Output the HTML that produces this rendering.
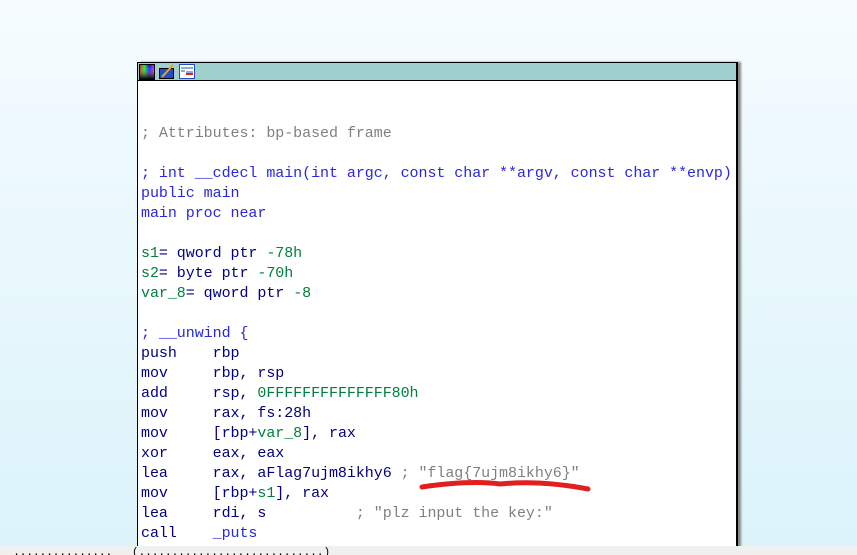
<!DOCTYPE html>
<html><head><style>
html,body{margin:0;padding:0;width:857px;height:555px;overflow:hidden;background:linear-gradient(#f6fcff,#eaf8fd 40%,#dbf3fa);position:relative;font-family:"Liberation Mono",monospace}
#box{position:absolute;left:137px;top:62px;width:598px;height:500px;border:1px solid #000;border-right:2px solid #000;border-bottom:none;background:#fff;box-shadow:3px 0 2px #888}
#hdr{height:17px;background:#a0d0ce;border-bottom:1px solid #000;position:relative}
#code{position:absolute;left:3px;top:21px;font-size:15px;line-height:20px;white-space:pre;color:#000080;letter-spacing:-0.05px}
.c{color:#808080}.b{color:#2828e0}.g{color:#008040}
#bar{position:absolute;left:0;top:546px;width:857px;height:9px;background:#f0f0f0;font-size:11px;line-height:14px;color:#000;white-space:pre;overflow:hidden}
</style></head><body>
<div id="box"><div id="hdr">
<svg width="60" height="18" style="position:absolute;left:0;top:0">
<defs><linearGradient id="r" x1="0" x2="1"><stop offset="0" stop-color="#f00"/><stop offset=".33" stop-color="#0f0"/><stop offset=".66" stop-color="#00f"/><stop offset="1" stop-color="#f0f"/></linearGradient><linearGradient id="d" x1="0" y1="0" x2="0" y2="1"><stop offset="0" stop-color="#fff" stop-opacity="0"/><stop offset="1" stop-color="#000"/></linearGradient></defs>
<rect x="1.5" y="1.5" width="15" height="15" fill="url(#r)" stroke="#000"/><rect x="2" y="2" width="14" height="14" fill="url(#d)"/>
<rect x="21.5" y="5.5" width="14" height="10" fill="#2050c0" stroke="#000" stroke-width="1"/><path d="M24 14 L35 2" stroke="#f0a020" stroke-width="2"/>
<rect x="41.5" y="1.5" width="15" height="14" fill="#fff" stroke="#2050c0"/><path d="M43 5h12M43 8h4M48 9h7" stroke="#2050c0"/><rect x="48" y="10" width="7" height="2" fill="#e02020"/>
</svg></div>
<div id="code">

<span class="c">; Attributes: bp-based frame</span>

<span class="b">; int __cdecl main(int argc, const char **argv, const char **envp)</span>
<span class="b">public main</span>
<span class="b">main proc near</span>

<span class="g">s1</span>= qword ptr <span class="g">-78h</span>
<span class="g">s2</span>= byte ptr <span class="g">-70h</span>
<span class="g">var_8</span>= qword ptr <span class="g">-8</span>

<span class="b">; __unwind {</span>
push    rbp
mov     rbp, rsp
add     rsp, <span class="g">0FFFFFFFFFFFFFF80h</span>
mov     rax, fs:28h
mov     [rbp+<span class="g">var_8</span>], rax
xor     eax, eax
lea     rax, aFlag7ujm8ikhy6 <span class="c">; "flag{7ujm8ikhy6}"</span>
mov     [rbp+<span class="g">s1</span>], rax
lea     rdi, s          <span class="c">; "plz input the key:"</span>
call    <span class="b">_puts</span>
</div></div>
<svg width="857" height="555" style="position:absolute;left:0;top:0"><path d="M422 487 Q470 480 500 484 Q540 480 588 489" stroke="#e02020" stroke-width="5" fill="none" stroke-linecap="round"/></svg>
<div id="bar">  ...............   (............................)</div>
</body></html>
